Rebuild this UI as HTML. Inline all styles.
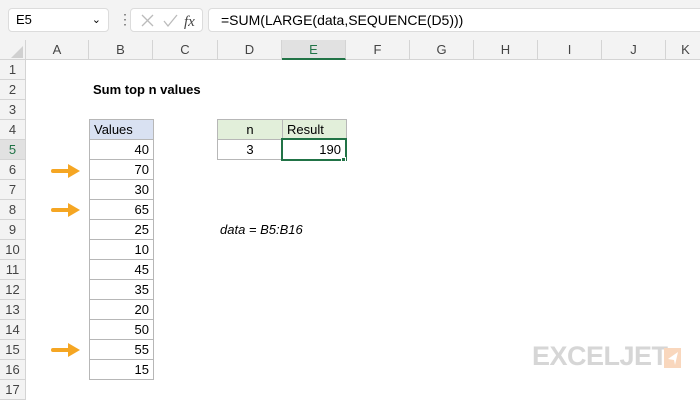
<!DOCTYPE html><html><head><style>
*{margin:0;padding:0;box-sizing:border-box}
body{width:700px;height:400px;overflow:hidden;background:#fff;font-family:"Liberation Sans",Calibri,sans-serif;font-size:13px;position:relative;color:#000}
.a{position:absolute}
.top{left:0;top:0;width:700px;height:40px;background:#f3f3f3}
.box{background:#fff;border:1px solid #dcdcdc;border-radius:4px}
.ch{top:40px;height:20px;background:#f3f3f3;border-right:1px solid #d4d4d4;border-bottom:1px solid #d4d4d4;text-align:center;line-height:19px;color:#444}
.rh{left:0;width:26px;height:20px;background:#f3f3f3;border-bottom:1px solid #d4d4d4;border-right:1px solid #d4d4d4;text-align:center;line-height:20px;color:#444}
.c{height:21px;border:1px solid #b7b7b7;line-height:19px;padding:0 4px}
.r{text-align:right}
.arr{width:30px;height:14px}
</style></head><body>
<div class="a top"></div>
<div class="a box" style="left:8px;top:8px;width:101px;height:24px;line-height:22px;padding-left:7px">E5<span class="a" style="right:7px;top:0;font-size:11px">&#8964;</span></div>
<div class="a" style="left:118px;top:12px;color:#666;font-size:14px;line-height:14px">&#8942;</div>
<div class="a box" style="left:130px;top:8px;width:73px;height:24px"></div>
<svg class="a" style="left:138px;top:12px" width="62" height="18"><path d="M4 3l11 11M15 3L4 14" stroke="#bbb" stroke-width="1.3" fill="none"/><path d="M26 9l4 5 9-11" stroke="#bbb" stroke-width="1.3" fill="none"/><text x="46" y="14" font-family="Liberation Serif" font-style="italic" font-size="15" fill="#444">fx</text></svg>
<div class="a box" style="left:208px;top:8px;width:500px;height:24px;line-height:22px;padding-left:12px;font-size:14px">=SUM(LARGE(data,SEQUENCE(D5)))</div>
<div class="a ch" style="left:0;width:26px"></div>
<svg class="a" style="left:10px;top:45px" width="14" height="14"><path d="M13 1V13H1Z" fill="#d0d0d0"/></svg>
<div class="a ch" style="left:26px;width:63px">A</div>
<div class="a ch" style="left:89px;width:64px">B</div>
<div class="a ch" style="left:153px;width:65px">C</div>
<div class="a ch" style="left:218px;width:64px">D</div>
<div class="a ch" style="left:282px;width:64px;background:#e1e1e1;border-bottom:2px solid #217346;color:#217346">E</div>
<div class="a ch" style="left:346px;width:64px">F</div>
<div class="a ch" style="left:410px;width:64px">G</div>
<div class="a ch" style="left:474px;width:64px">H</div>
<div class="a ch" style="left:538px;width:64px">I</div>
<div class="a ch" style="left:602px;width:64px">J</div>
<div class="a ch" style="left:666px;width:40px">K</div>
<div class="a rh" style="top:60px">1</div><div class="a rh" style="top:80px">2</div><div class="a rh" style="top:100px">3</div><div class="a rh" style="top:120px">4</div><div class="a rh" style="top:140px;background:#e1e1e1;color:#217346">5</div><div class="a rh" style="top:160px">6</div><div class="a rh" style="top:180px">7</div><div class="a rh" style="top:200px">8</div><div class="a rh" style="top:220px">9</div><div class="a rh" style="top:240px">10</div><div class="a rh" style="top:260px">11</div><div class="a rh" style="top:280px">12</div><div class="a rh" style="top:300px">13</div><div class="a rh" style="top:320px">14</div><div class="a rh" style="top:340px">15</div><div class="a rh" style="top:360px">16</div><div class="a rh" style="top:380px">17</div>
<div class="a" style="left:93px;top:82px;font-weight:bold">Sum top n values</div>
<div class="a c" style="left:89px;top:119px;width:65px;background:#d9e1f2">Values</div>
<div class="a c r" style="left:89px;top:139px;width:65px">40</div>
<div class="a c r" style="left:89px;top:159px;width:65px">70</div>
<div class="a c r" style="left:89px;top:179px;width:65px">30</div>
<div class="a c r" style="left:89px;top:199px;width:65px">65</div>
<div class="a c r" style="left:89px;top:219px;width:65px">25</div>
<div class="a c r" style="left:89px;top:239px;width:65px">10</div>
<div class="a c r" style="left:89px;top:259px;width:65px">45</div>
<div class="a c r" style="left:89px;top:279px;width:65px">35</div>
<div class="a c r" style="left:89px;top:299px;width:65px">20</div>
<div class="a c r" style="left:89px;top:319px;width:65px">50</div>
<div class="a c r" style="left:89px;top:339px;width:65px">55</div>
<div class="a c r" style="left:89px;top:359px;width:65px">15</div>
<div class="a c" style="left:217px;top:119px;width:66px;background:#e2efda;text-align:center">n</div>
<div class="a c" style="left:282px;top:119px;width:65px;background:#e2efda">Result</div>
<div class="a c" style="left:217px;top:139px;width:66px;text-align:center">3</div>
<div class="a c r" style="left:281px;top:138px;width:66px;height:23px;border:2px solid #217346;line-height:19px">190</div>
<div class="a" style="left:341px;top:157px;width:5px;height:5px;background:#217346;border:1px solid #fff"></div>
<div class="a" style="left:220px;top:222px;font-style:italic">data = B5:B16</div>
<svg class="a arr" style="left:51px;top:164px" viewBox="0 0 30 14"><path d="M2 7H20" stroke="#f5a623" stroke-width="4" stroke-linecap="round"/><path d="M17 0L29 7 17 14Z" fill="#f5a623"/></svg>
<svg class="a arr" style="left:51px;top:203px" viewBox="0 0 30 14"><path d="M2 7H20" stroke="#f5a623" stroke-width="4" stroke-linecap="round"/><path d="M17 0L29 7 17 14Z" fill="#f5a623"/></svg>
<svg class="a arr" style="left:51px;top:343px" viewBox="0 0 30 14"><path d="M2 7H20" stroke="#f5a623" stroke-width="4" stroke-linecap="round"/><path d="M17 0L29 7 17 14Z" fill="#f5a623"/></svg>
<div class="a" style="left:532px;top:341px;font-size:27px;font-weight:bold;color:#d6d6d6;letter-spacing:-0.5px">EXCELJET</div>
<svg class="a" style="left:664px;top:348px" width="17" height="20"><rect width="17" height="20" fill="#f9d7bd"/><path d="M14 4L4 11 10 12 11 17Z" fill="#fff"/></svg>
</body></html>
